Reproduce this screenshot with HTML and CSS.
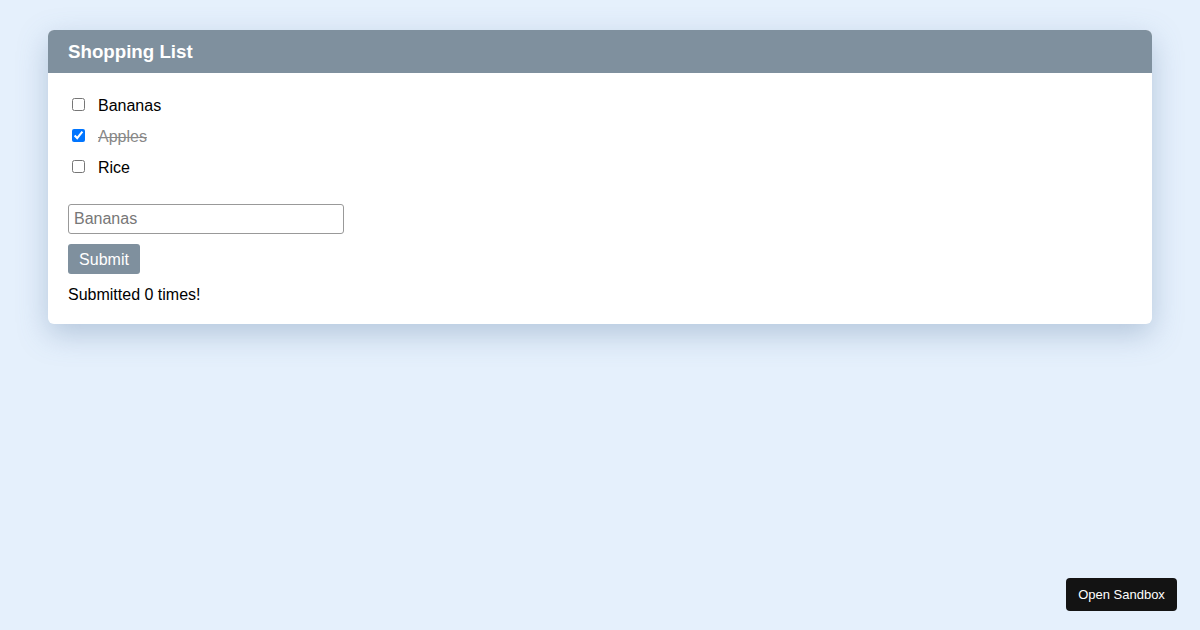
FILE: index.html
```html
<!DOCTYPE html>
<html>
<head>
<meta charset="utf-8">
<link rel="stylesheet" href="styles.css">
</head>
<body>
<div class="card">
  <div class="card-header">Shopping List</div>
  <div class="card-body">
    <ul class="list">
      <li class="item"><input type="checkbox"><span class="label">Bananas</span></li>
      <li class="item"><input type="checkbox" checked><span class="label done">Apples</span></li>
      <li class="item"><input type="checkbox"><span class="label">Rice</span></li>
    </ul>
    <form class="form" onsubmit="return false">
      <input class="text-input" type="text" placeholder="Bananas">
      <button class="submit" type="submit">Submit</button>
    </form>
    <div class="count">Submitted 0 times!</div>
  </div>
</div>
<a class="sandbox">Open Sandbox</a>
</body>
</html>
```
FILE: styles.css
```css
html, body {
  margin: 0;
  padding: 0;
}
body {
  background: #e5f0fc;
  font-family: "Liberation Sans", Arial, sans-serif;
  font-size: 16px;
  color: #000;
  padding: 30px 48px;
  height: 630px;
  box-sizing: border-box;
}
.card {
  background: #fff;
  border-radius: 6px;
  overflow: hidden;
  box-shadow: 0 10px 30px rgba(90, 120, 160, 0.35);
}
.card-header {
  background: #7f909e;
  color: #fff;
  font-weight: bold;
  font-size: 18.72px;
  height: 43px;
  line-height: 44px;
  padding: 0 20px;
}
.card-body {
  padding: 17px 20px 19px;
}
.list {
  list-style: none;
  margin: 0;
  padding: 0;
}
.item {
  display: flex;
  align-items: center;
  height: 31px;
}
.item input {
  margin: 3px 3px 3px 4px;
  width: 13px;
  height: 13px;
  position: relative;
  top: -1px;
}
.label {
  margin-left: 10px;
}
.done {
  text-decoration: line-through;
  color: #888;
}
.form {
  display: flex;
  flex-direction: column;
  align-items: flex-start;
  gap: 10px;
  margin-top: 21px;
}
.text-input {
  width: 276px;
  height: 30px;
  box-sizing: border-box;
  border: 1px solid #999;
  border-radius: 3px;
  padding: 0 5px;
  font-family: "Liberation Sans", Arial, sans-serif;
  font-size: 16px;
  margin: 0;
}
.text-input::placeholder {
  color: #777;
}
.submit {
  background: #7f909e;
  color: #fff;
  border: none;
  border-radius: 3px;
  height: 30px;
  width: 72px;
  padding: 2px 0 0;
  box-sizing: border-box;
  font-family: "Liberation Sans", Arial, sans-serif;
  font-size: 16px;
  margin: 0;
}
.count {
  margin-top: 11px;
  line-height: 20px;
}
.sandbox {
  position: fixed;
  right: 23px;
  bottom: 19px;
  background: #131313;
  color: #fff;
  font-family: "Liberation Sans", Arial, sans-serif;
  font-size: 13px;
  width: 111px;
  text-align: center;
  height: 33px;
  line-height: 34px;
  border-radius: 4px;
}
```
